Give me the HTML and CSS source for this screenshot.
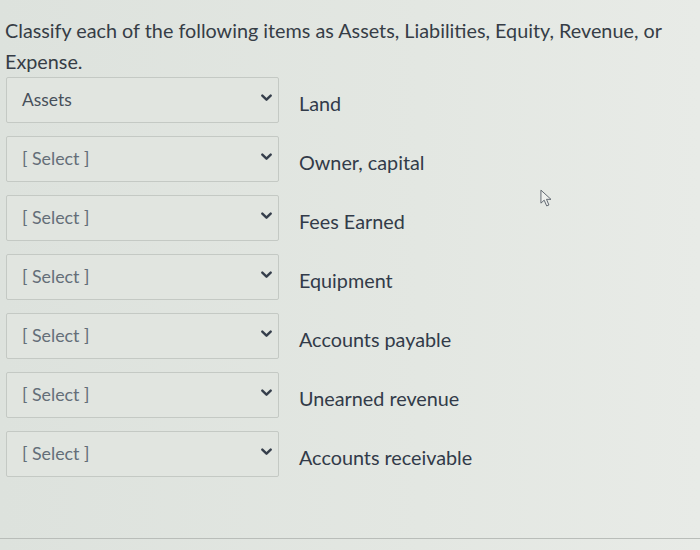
FILE: index.html
```html
<!DOCTYPE html>
<html>
<head>
<meta charset="utf-8">
<link rel="stylesheet" href="styles.css">
</head>
<body>
<div class="page">
  <p class="question">Classify each of the following items as Assets, Liabilities, Equity, Revenue, or Expense.</p>
  <div class="rows">
    <div class="row"><div class="select filled"><span>Assets</span><svg class="chev" viewBox="0 0 10 7"><path d="M1.2 1.3 L5 5 L8.8 1.3" /></svg></div><div class="label">Land</div></div>
    <div class="row"><div class="select"><span>[ Select ]</span><svg class="chev" viewBox="0 0 10 7"><path d="M1.2 1.3 L5 5 L8.8 1.3" /></svg></div><div class="label">Owner, capital</div></div>
    <div class="row"><div class="select"><span>[ Select ]</span><svg class="chev" viewBox="0 0 10 7"><path d="M1.2 1.3 L5 5 L8.8 1.3" /></svg></div><div class="label">Fees Earned</div></div>
    <div class="row"><div class="select"><span>[ Select ]</span><svg class="chev" viewBox="0 0 10 7"><path d="M1.2 1.3 L5 5 L8.8 1.3" /></svg></div><div class="label">Equipment</div></div>
    <div class="row"><div class="select"><span>[ Select ]</span><svg class="chev" viewBox="0 0 10 7"><path d="M1.2 1.3 L5 5 L8.8 1.3" /></svg></div><div class="label">Accounts payable</div></div>
    <div class="row"><div class="select"><span>[ Select ]</span><svg class="chev" viewBox="0 0 10 7"><path d="M1.2 1.3 L5 5 L8.8 1.3" /></svg></div><div class="label">Unearned revenue</div></div>
    <div class="row"><div class="select"><span>[ Select ]</span><svg class="chev" viewBox="0 0 10 7"><path d="M1.2 1.3 L5 5 L8.8 1.3" /></svg></div><div class="label">Accounts receivable</div></div>
  </div>
  <div class="rule"></div>
  <svg class="cursor" viewBox="0 0 14 20"><path d="M1 1 L1 15 L4.5 11.8 L7.2 18 L9.6 17 L7 10.9 L11.8 10.9 Z" /></svg>
</div>
</body>
</html>
```
FILE: styles.css
```css
html, body {
  margin: 0;
  padding: 0;
  background: #e2e6e1;
}
.page {
  position: relative;
  width: 700px;
  height: 550px;
  overflow: hidden;
  background: linear-gradient(90deg, #dde2dd 0%, #e3e7e2 60%, #e8ebe7 100%);
  font-family: Lato, "Open Sans", sans-serif;
  color: #333b45;
}
.question {
  margin: 0;
  padding: 15px 20px 0 5px;
  font-size: 19.8px;
  line-height: 31px;
  color: #363d46;
}
.rows {
  display: flex;
  flex-direction: column;
  gap: 13px;
  padding-left: 6px;
}
.row {
  display: flex;
  align-items: center;
  gap: 20px;
}
.select {
  box-sizing: border-box;
  width: 273px;
  height: 46px;
  border: 1px solid #c4c9c4;
  border-radius: 2px;
  background: #e1e5e0;
  display: flex;
  align-items: center;
  justify-content: space-between;
  padding: 0 6px 2px 15px;
  font-size: 17.8px;
  color: #646e78;
}
.select.filled {
  color: #47505a;
  font-size: 17.4px;
}
.chev {
  width: 11px;
  height: 8px;
  margin-bottom: 2px;
}
.chev path {
  fill: none;
  stroke: #353e4b;
  stroke-width: 2.2;
  stroke-linecap: round;
  stroke-linejoin: round;
}
.label {
  font-size: 19.8px;
  color: #323b49;
  padding-top: 5px;
}
.rule {
  position: absolute;
  left: 0;
  right: 0;
  top: 538px;
  height: 1px;
  background: #b9bdb9;
}
.cursor {
  position: absolute;
  left: 540px;
  top: 189px;
  width: 13px;
  height: 19px;
}
.cursor path {
  fill: #eef0ed;
  stroke: #59606a;
  stroke-width: 1;
  stroke-linejoin: round;
}
```
